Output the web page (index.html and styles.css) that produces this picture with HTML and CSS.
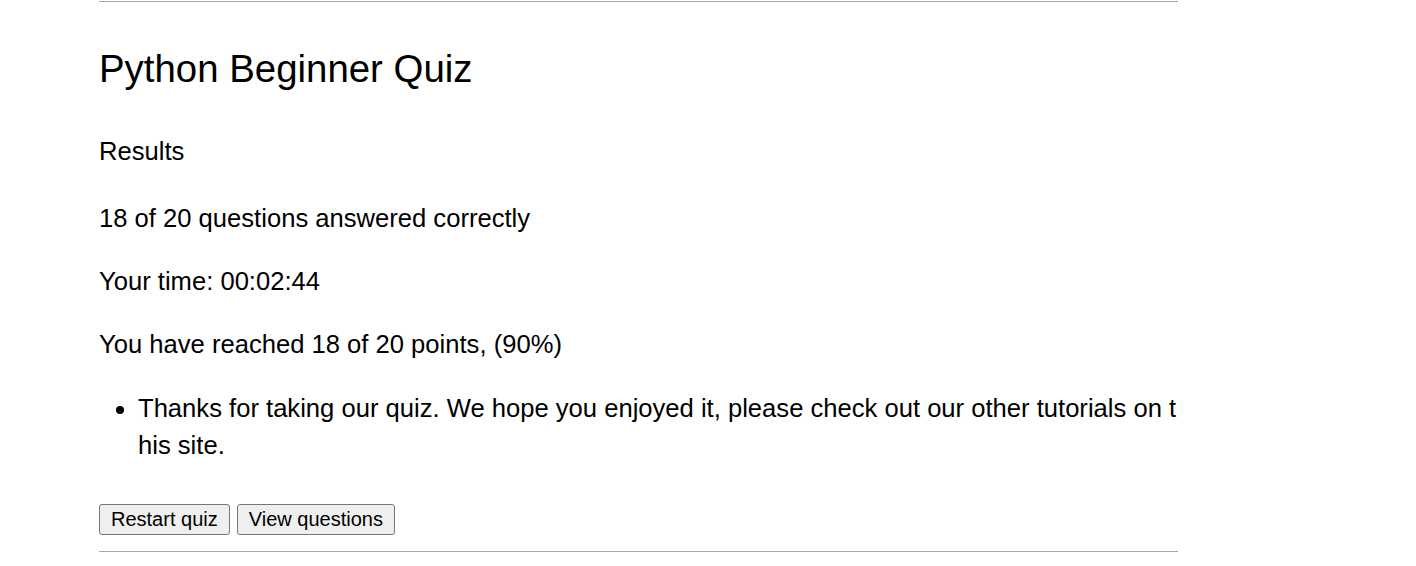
FILE: index.html
```html
<!DOCTYPE html>
<html>
<head>
<meta charset="utf-8">
<link rel="stylesheet" href="styles.css">
</head>
<body>
<div class="page">
  <hr class="rule">
  <h1 class="title">Python Beginner Quiz</h1>
  <p class="line results">Results</p>
  <p class="line">18 of 20 questions answered correctly</p>
  <p class="line">Your time: 00:02:44</p>
  <p class="line">You have reached 18 of 20 points, (90%)</p>
  <ul class="notes">
    <li>Thanks for taking our quiz. We hope you enjoyed it, please check out our other tutorials on this site.</li>
  </ul>
  <div class="actions">
    <button class="btn">Restart quiz</button>
    <button class="btn">View questions</button>
  </div>
  <hr class="rule">
</div>
</body>
</html>
```
FILE: styles.css
```css
html, body {
  margin: 0;
  padding: 0;
  background: #fff;
}
body {
  font-family: "Liberation Sans", Arial, sans-serif;
  color: #000;
}
.page {
  width: 1079px;
  margin-left: 99px;
  padding-top: 1px;
}
.rule {
  border: 0;
  border-top: 1px solid #a6a6a6;
  margin: 0;
  height: 0;
}
.title {
  font-size: 38.4px;
  font-weight: normal;
  line-height: 44px;
  margin: 45px 0 0 0;
}
.line {
  font-size: 25.6px;
  line-height: 37px;
  margin: 26px 0 0 0;
}
.results {
  margin-top: 42px;
  margin-bottom: 30px;
}
.results + .line {
  margin-top: 30px;
}
.notes {
  font-size: 25.6px;
  line-height: 37px;
  margin: 27px 0 0 0;
  padding-left: 39px;
  word-break: break-all;
}
.actions {
  display: flex;
  gap: 7px;
  margin-top: 40px;
}
.btn {
  font-family: "Liberation Sans", Arial, sans-serif;
  font-size: 20px;
  color: #000;
  background: #efefef;
  border: 1px solid #767676;
  border-radius: 3px;
  padding: 2px 11px;
  height: 31px;
  line-height: 25px;
}
.actions + .rule {
  margin-top: 16px;
}
```
